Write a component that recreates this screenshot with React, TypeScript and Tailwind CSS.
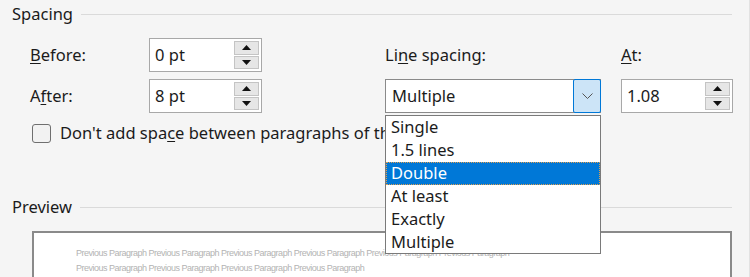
import React from "react";

const font = { fontFamily: '"Noto Sans", "Open Sans", sans-serif' };

function Spin({ value, width }: { value: string; width: string }) {
  return (
    <div className={`${width} h-[34px] bg-white border border-[#a8a8a8] flex items-stretch p-[2px] pr-[2px]`}>
      <div className="flex-1 flex items-center pl-[3px] text-[16.5px] text-[#1b1b1b]">{value}</div>
      <div className="w-[25px] flex flex-col gap-[1px]">
        <div className="flex-1 bg-[#e6e6e6] border border-[#c4c4c4] flex items-center justify-center">
          <svg width="9" height="5" viewBox="0 0 9 5"><polygon points="0,5 9,5 4.5,0" fill="#111" /></svg>
        </div>
        <div className="flex-1 bg-[#e6e6e6] border border-[#c4c4c4] flex items-center justify-center">
          <svg width="9" height="5" viewBox="0 0 9 5"><polygon points="0,0 9,0 4.5,5" fill="#111" /></svg>
        </div>
      </div>
    </div>
  );
}

function Header({ title }: { title: string }) {
  return (
    <div className="h-[28px] flex items-center pl-[12px] pr-[17px]">
      <span className="text-[16.5px] text-[#1b1b1b]">{title}</span>
      <div className="flex-1 ml-[8px] h-px bg-[#dadada]" />
    </div>
  );
}

export default function App() {
  const items = ["Single", "1.5 lines", "Double", "At least", "Exactly", "Multiple"];
  return (
    <div className="w-[750px] h-[277px] bg-[#f5f5f5] relative overflow-hidden border-r border-[#e2e2e2]" style={font}>
      <Header title="Spacing" />
      <div className="mt-[10px] flex items-center pl-[30px] h-[34px] text-[16.5px] text-[#1b1b1b]">
        <div className="w-[119px]"><span className="underline underline-offset-2">B</span>efore:</div>
        <Spin value="0 pt" width="w-[113px]" />
        <div className="w-[123px]" />
        <div className="w-[216px]">Li<span className="underline underline-offset-2">n</span>e spacing:</div>
        <div className="w-[20px]" />
        <div><span className="underline underline-offset-2">A</span>t:</div>
      </div>
      <div className="mt-[7px] flex items-center pl-[30px] h-[34px] text-[16.5px] text-[#1b1b1b]">
        <div className="w-[119px]">A<span className="underline underline-offset-2">f</span>ter:</div>
        <Spin value="8 pt" width="w-[113px]" />
        <div className="w-[123px]" />
        <div className="w-[216px] h-[34px] bg-white border border-[#8a8a8a] flex items-stretch">
          <div className="flex-1 flex items-center pl-[6px]">Multiple</div>
          <div className="w-[28px] -m-px bg-[#cce4f7] border border-[#0078d7] rounded-[2px] flex items-center justify-center">
            <svg width="11" height="6" viewBox="0 0 11 6"><polyline points="0.5,0.5 5.5,5.5 10.5,0.5" fill="none" stroke="#555" strokeWidth="1" /></svg>
          </div>
        </div>
        <div className="w-[20px]" />
        <Spin value="1.08" width="w-[112px]" />
      </div>
      <div className="mt-[10px] flex items-center pl-[32px] h-[21px] text-[16.5px] text-[#1b1b1b]">
        <div className="w-[19px] h-[19px] rounded-[3px] border border-[#6f6f6f] bg-[#f2f2f2]" />
        <span className="ml-[9px] whitespace-nowrap">Don't add spa<span className="underline underline-offset-2">c</span>e between paragraphs of the same style</span>
      </div>
      <div className="mt-[49px]">
        <Header title="Preview" />
      </div>
      <div className="mt-[10px] ml-[32px] mr-[17px] h-[60px] bg-white border-2 border-[#8a8a8a] pl-[42px] pt-[13px] text-[9px] leading-[15px] tracking-[-0.5px] text-[#b3b3b3] whitespace-nowrap" style={{ fontFamily: '"Liberation Sans", sans-serif' }}>
        <div>{Array(6).fill("Previous Paragraph").join(" ")}</div>
        <div>{Array(4).fill("Previous Paragraph").join(" ")}</div>
      </div>
      <div className="absolute left-[385px] top-[115px] w-[216px] h-[139px] bg-white border border-[#7a7a7a] text-[16.5px] text-[#1b1b1b]">
        {items.map((it) => (
          <div
            key={it}
            className={
              it === "Double"
                ? "h-[23px] flex items-center pl-[4px] bg-[#0078d7] text-white border border-dotted border-[#e0a050]"
                : "h-[23px] flex items-center pl-[5px]"
            }
          >
            {it}
          </div>
        ))}
      </div>
    </div>
  );
}
